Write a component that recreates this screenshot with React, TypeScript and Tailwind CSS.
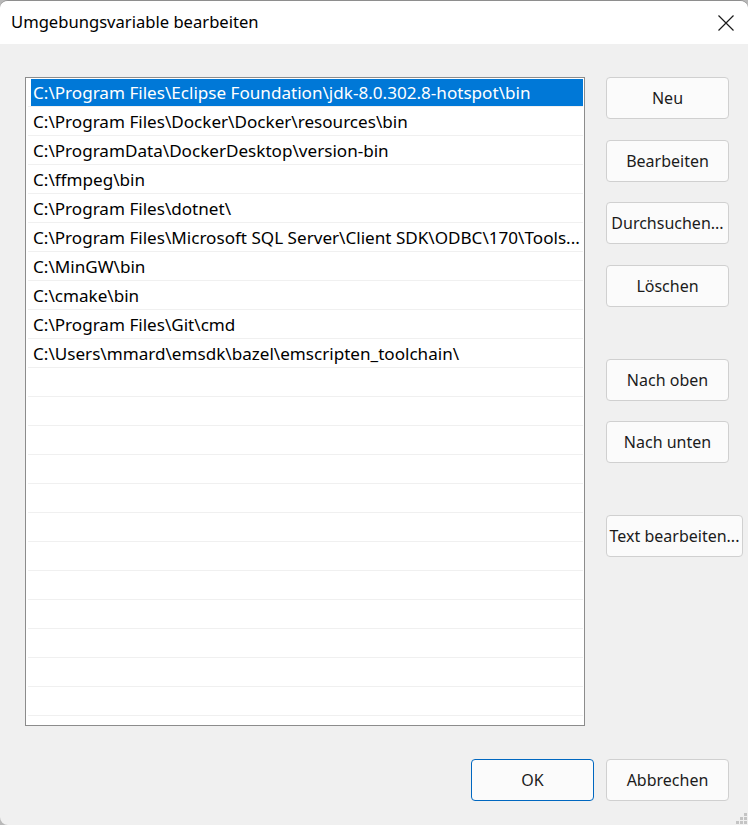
const paths = [
  "C:\\Program Files\\Eclipse Foundation\\jdk-8.0.302.8-hotspot\\bin",
  "C:\\Program Files\\Docker\\Docker\\resources\\bin",
  "C:\\ProgramData\\DockerDesktop\\version-bin",
  "C:\\ffmpeg\\bin",
  "C:\\Program Files\\dotnet\\",
  "C:\\Program Files\\Microsoft SQL Server\\Client SDK\\ODBC\\170\\Tools...",
  "C:\\MinGW\\bin",
  "C:\\cmake\\bin",
  "C:\\Program Files\\Git\\cmd",
  "C:\\Users\\mmard\\emsdk\\bazel\\emscripten_toolchain\\",
]

const emptyRows = Array.from({ length: 13 })

function DialogButton({
  label,
  primary,
  className = "w-[123px]",
}: {
  label: string
  primary?: boolean
  className?: string
}) {
  return (
    <button
      className={
        "flex h-[42px] items-center justify-center whitespace-nowrap rounded-[4px] border bg-[#fbfbfb] pb-[1px] text-[16px] text-[#1b1b1b] " +
        (primary ? "border-[#0067c0] " : "border-[#d0d0d0] ") +
        className
      }
    >
      {label}
    </button>
  )
}

function ResizeGrip() {
  const dots = [
    [8, 0],
    [4, 4],
    [8, 4],
    [0, 8],
    [4, 8],
    [8, 8],
  ]
  return (
    <svg width="11" height="11" viewBox="0 0 11 11" className="absolute bottom-[1px] right-[1px]">
      {dots.map(([x, y], i) => (
        <rect key={i} x={x} y={y} width="3" height="3" fill="#c4c4c4" />
      ))}
    </svg>
  )
}

export default function App() {
  return (
    <div
      className="h-[825px] w-[748px] bg-[#b8b8b8]"
      style={{ fontFamily: '"Noto Sans", "Open Sans", sans-serif' }}
    >
      <div className="relative flex h-full w-full flex-col overflow-hidden rounded-t-[8px] rounded-bl-[8px] border-t border-[#8e8e8e] bg-[#f0f0f0]">
        {/* title bar */}
        <div className="flex h-[43px] shrink-0 items-center justify-between bg-white pl-[11px] pr-[15px]">
          <span className="text-[16.6px] text-black">Umgebungsvariable bearbeiten</span>
          <svg width="16" height="16" viewBox="0 0 16 16" className="mr-[-1px]">
            <path d="M0.5 0.5L15.5 15.5M15.5 0.5L0.5 15.5" stroke="#1a1a1a" strokeWidth="1.2" fill="none" />
          </svg>
        </div>

        {/* body */}
        <div className="flex gap-[21px] pl-[25px] pt-[33px]">
          <div className="h-[649px] w-[560px] shrink-0 overflow-hidden border border-[#8c8c8c] bg-white">
            <div className="ml-[2px] mr-[1px]">
              {paths.map((p, i) => (
                <div key={i} className="h-[29px] border-b border-[#f0f0f0] pt-[1px]">
                  <div
                    className={
                      "ml-[3px] flex h-[27px] items-center overflow-hidden whitespace-nowrap pl-[2px] text-[17.1px] " +
                      (i === 0 ? "bg-[#0078d7] text-white" : "text-black")
                    }
                  >
                    {p}
                  </div>
                </div>
              ))}
              {emptyRows.map((_, i) => (
                <div key={"e" + i} className="h-[29px] border-b border-[#f0f0f0]" />
              ))}
            </div>
          </div>

          <div className="flex flex-col items-start">
            <DialogButton label="Neu" />
            <DialogButton label="Bearbeiten" className="mt-[21px] w-[123px]" />
            <DialogButton label="Durchsuchen..." className="mt-[20px] w-[123px]" />
            <DialogButton label="Löschen" className="mt-[21px] w-[123px]" />
            <DialogButton label="Nach oben" className="mt-[52px] w-[123px]" />
            <DialogButton label="Nach unten" className="mt-[20px] w-[123px]" />
            <DialogButton label="Text bearbeiten..." className="mt-[52px] w-[137px]" />
          </div>
        </div>

        {/* footer */}
        <div className="flex justify-end gap-[12px] pr-[19px] pt-[33px]">
          <DialogButton label="OK" primary />
          <DialogButton label="Abbrechen" />
        </div>

        <ResizeGrip />
      </div>
    </div>
  )
}
